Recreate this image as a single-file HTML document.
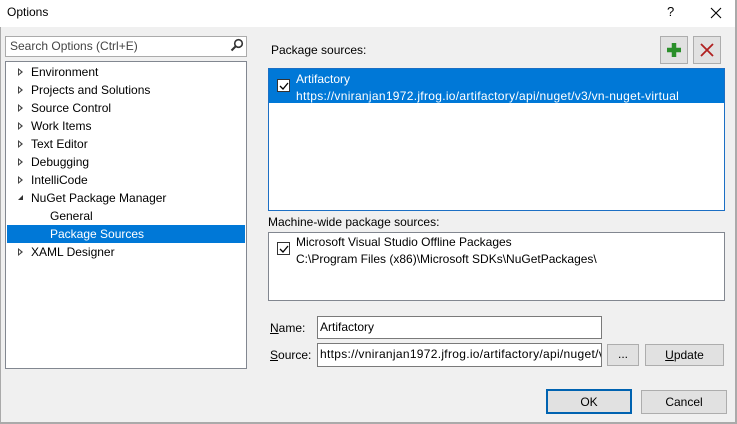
<!DOCTYPE html>
<html><head><style>
*{box-sizing:border-box;margin:0;padding:0}
body{width:737px;height:424px;overflow:hidden;background:#f0f0f0;font-family:"Segoe UI","Liberation Sans",sans-serif;font-size:12px;color:#000;position:relative}
.abs{position:absolute}
.title{left:0;top:0;width:737px;height:27px;background:#fff}
.box{background:#fff;border:1px solid #828790}
.btn{background:#e1e1e1;border:1px solid #adadad;text-align:center;line-height:21px}
.t{position:absolute;white-space:nowrap;transform:translateY(1px)}
.tri{position:absolute;width:0;height:0;border-top:4px solid transparent;border-bottom:4px solid transparent;border-left:5px solid #444}
.tri::after{content:"";position:absolute;left:-4px;top:-2px;border-top:2px solid transparent;border-bottom:2px solid transparent;border-left:2px solid #fff}
.cb{position:absolute;width:13px;height:13px;border:1px solid #333;background:#fff}
.w{letter-spacing:0.3px}
</style></head><body>
<div class="abs title"></div>
<div class="t" style="left:7px;top:4px;font-size:12px">Options</div>
<div class="t" style="left:667px;top:3px;font-size:13px">?</div>
<svg class="abs" style="left:710px;top:7px" width="12" height="12"><path d="M1 1L11 11M11 1L1 11" stroke="#000" stroke-width="1.1"/></svg>
<div class="abs" style="left:0;top:27px;width:1px;height:397px;background:#aaa"></div>
<div class="abs" style="left:735px;top:0;width:2px;height:424px;background:#aaa"></div>
<div class="abs" style="left:0;top:422px;width:737px;height:2px;background:#aaa"></div>

<div class="abs box" style="left:5px;top:36px;width:242px;height:21px;border-color:#ababab"></div>
<div class="t" style="left:10px;top:38px;color:#444">Search Options (Ctrl+E)</div>
<svg class="abs" style="left:230px;top:38px" width="14" height="14"><circle cx="8.5" cy="5.5" r="3.8" fill="none" stroke="#333" stroke-width="1.6"/><path d="M6 8L1.5 12.5" stroke="#333" stroke-width="2"/></svg>

<div class="abs box" style="left:5px;top:61px;width:242px;height:308px"></div>
<div class="abs" style="left:7px;top:225px;width:238px;height:18px;background:#0078d7"></div>
<div class="tri" style="left:18px;top:68px"></div><div class="t" style="left:31px;top:64px">Environment</div>
<div class="tri" style="left:18px;top:86px"></div><div class="t" style="left:31px;top:82px">Projects and Solutions</div>
<div class="tri" style="left:18px;top:104px"></div><div class="t" style="left:31px;top:100px">Source Control</div>
<div class="tri" style="left:18px;top:122px"></div><div class="t" style="left:31px;top:118px">Work Items</div>
<div class="tri" style="left:18px;top:140px"></div><div class="t" style="left:31px;top:136px">Text Editor</div>
<div class="tri" style="left:18px;top:158px"></div><div class="t" style="left:31px;top:154px">Debugging</div>
<div class="tri" style="left:18px;top:176px"></div><div class="t" style="left:31px;top:172px">IntelliCode</div>
<svg class="abs" style="left:17px;top:194px" width="8" height="8"><path d="M6 1L6 6L1 6Z" fill="#333"/></svg><div class="t" style="left:31px;top:190px">NuGet Package Manager</div>
<div class="t" style="left:50px;top:208px">General</div>
<div class="t" style="left:50px;top:226px;color:#fff">Package Sources</div>
<div class="tri" style="left:18px;top:248px"></div><div class="t" style="left:31px;top:244px">XAML Designer</div>

<div class="t" style="left:271px;top:42px">Package sources:</div>
<div class="abs btn" style="left:660px;top:36px;width:28px;height:28px"></div>
<svg class="abs" style="left:666px;top:42px" width="16" height="16"><path d="M8 1V15M1 8H15" stroke="#2a8f2a" stroke-width="4.5"/></svg>
<div class="abs btn" style="left:693px;top:36px;width:28px;height:28px"></div>
<svg class="abs" style="left:699px;top:42px" width="16" height="16"><path d="M2 2L14 14M14 2L2 14" stroke="#b02020" stroke-width="1.8"/></svg>

<div class="abs box" style="left:268px;top:68px;width:457px;height:143px;border-color:#1c6fc4"></div>
<div class="abs" style="left:269px;top:69px;width:455px;height:34px;background:#0078d7"></div>
<div class="cb" style="left:277px;top:79px"></div>
<svg class="abs" style="left:278px;top:80px" width="12" height="12"><path d="M2 6L5 9L10 3" fill="none" stroke="#000" stroke-width="1.3"/></svg>
<div class="t" style="left:296px;top:71px;color:#fff">Artifactory</div>
<div class="t w" style="left:296px;top:88px;color:#fff">https://vniranjan1972.jfrog.io/artifactory/api/nuget/v3/vn-nuget-virtual</div>

<div class="t" style="left:268px;top:214px">Machine-wide package sources:</div>
<div class="abs box" style="left:268px;top:232px;width:457px;height:69px"></div>
<div class="cb" style="left:277px;top:242px"></div>
<svg class="abs" style="left:278px;top:243px" width="12" height="12"><path d="M2 6L5 9L10 3" fill="none" stroke="#000" stroke-width="1.3"/></svg>
<div class="t" style="left:296px;top:234px">Microsoft Visual Studio Offline Packages</div>
<div class="t" style="left:296px;top:251px">C:\Program Files (x86)\Microsoft SDKs\NuGetPackages\</div>

<div class="t" style="left:270px;top:320px"><u>N</u>ame:</div>
<div class="abs box" style="left:317px;top:316px;width:285px;height:23px;border-color:#7a7a7a"></div>
<div class="t" style="left:320px;top:319px">Artifactory</div>
<div class="t" style="left:270px;top:347px"><u>S</u>ource:</div>
<div class="abs box" style="left:317px;top:343px;width:285px;height:24px;border-color:#7a7a7a;overflow:hidden"><div class="t w" style="left:2px;top:2px">https://vniranjan1972.jfrog.io/artifactory/api/nuget/v3</div></div>
<div class="abs btn" style="left:607px;top:344px;width:32px;height:22px;line-height:18px">...</div>
<div class="abs btn" style="left:645px;top:344px;width:79px;height:22px"><u>U</u>pdate</div>

<div class="abs btn" style="left:546px;top:389px;width:86px;height:25px;border:2px solid #0063b1;line-height:22px">OK</div>
<div class="abs btn" style="left:641px;top:390px;width:86px;height:24px;line-height:23px">Cancel</div>
</body></html>
